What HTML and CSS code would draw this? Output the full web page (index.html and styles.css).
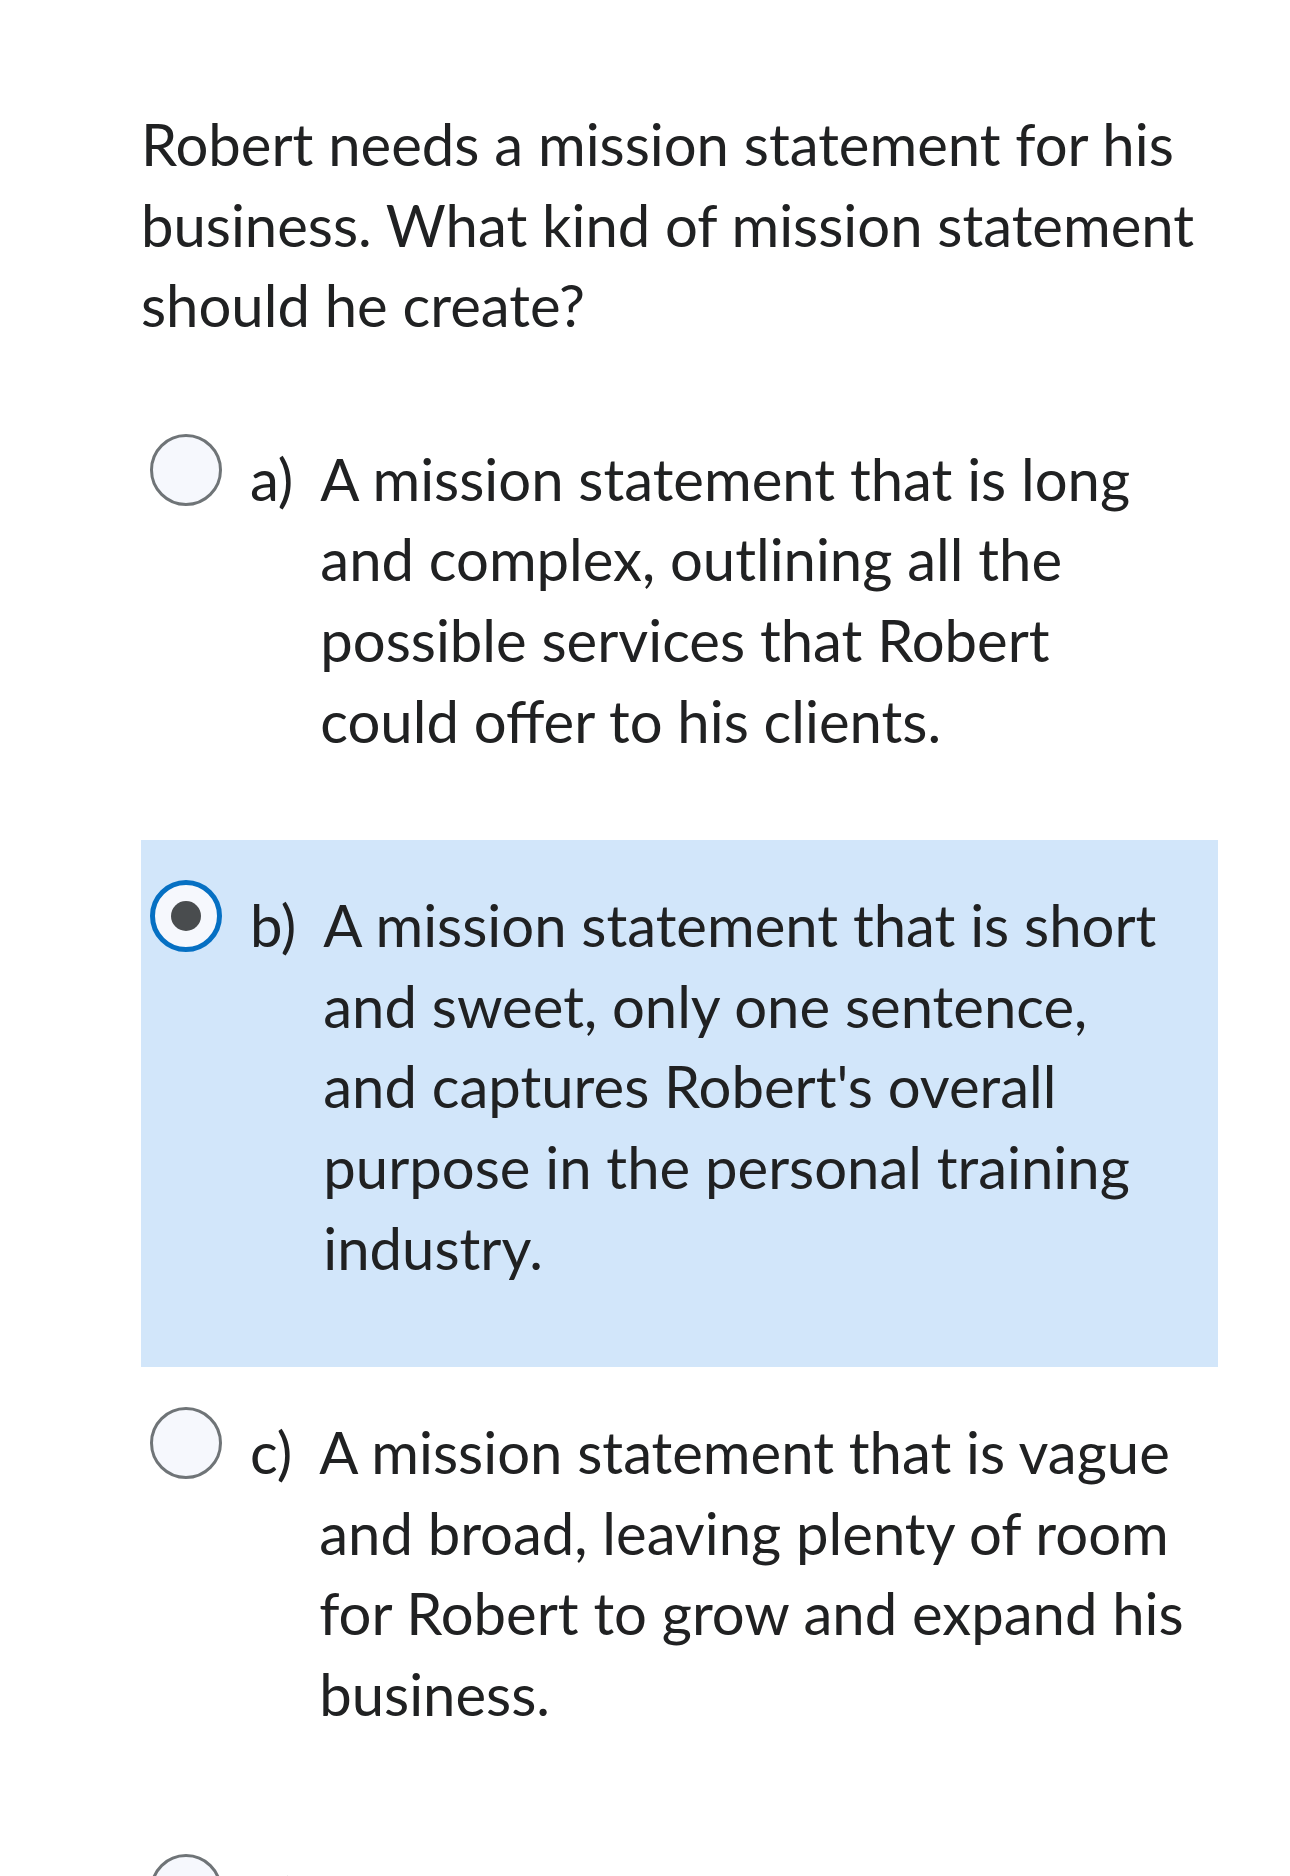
FILE: index.html
```html
<!DOCTYPE html>
<html lang="en">
<head>
<meta charset="utf-8">
<title>Quiz question</title>
<link rel="stylesheet" href="styles.css">
</head>
<body>
<main class="quiz">
  <p class="question">Robert needs a mission statement for his business. What kind of mission statement should he create?</p>
  <div class="options">
    <div class="option">
      <span class="radio"></span>
      <span class="label">a)</span>
      <span class="text">A mission statement that is long and complex, outlining all the possible services that Robert could offer to his clients.</span>
    </div>
    <div class="option selected">
      <span class="radio checked"></span>
      <span class="label">b)</span>
      <span class="text">A mission statement that is short and sweet, only one sentence, and captures Robert's overall purpose in the personal training industry.</span>
    </div>
    <div class="option">
      <span class="radio"></span>
      <span class="label">c)</span>
      <span class="text">A mission statement that is vague and broad, leaving plenty of room for Robert to grow and expand his business.</span>
    </div>
    <div class="option">
      <span class="radio"></span>
      <span class="label">d)</span>
      <span class="text">A mission statement that focuses only on the financial goals of the business.</span>
    </div>
  </div>
</main>
</body>
</html>
```
FILE: styles.css
```css
html, body {
  margin: 0;
  padding: 0;
  background: #ffffff;
}
body {
  font-family: "Lato", "Noto Sans", sans-serif;
  color: #202122;
  font-size: 58px;
  line-height: 80.6px;
}
.quiz {
  width: 1077px;
  margin-left: 141px;
  padding-top: 104px;
}
.question {
  margin: 0 0 48px 0;
}
.options {
  display: flex;
  flex-direction: column;
}
.option {
  display: flex;
  align-items: flex-start;
  padding: 40px 26px 79px 9px;
}
.option.selected {
  background: #d2e6fa;
}
.radio {
  flex: none;
  box-sizing: border-box;
  width: 72px;
  height: 72px;
  border-radius: 50%;
  border: 3px solid #6f7477;
  background: #f6f8fd;
  margin-right: 28px;
  position: relative;
}
.radio.checked {
  border: 5px solid #0670c3;
}
.radio.checked::after {
  content: "";
  position: absolute;
  left: 50%;
  top: 50%;
  width: 30px;
  height: 30px;
  margin: -15px 0 0 -15px;
  border-radius: 50%;
  background: #494c4e;
}
.label {
  flex: none;
  margin-top: 5px;
  margin-right: 27px;
}
.text {
  flex: 1;
  margin-top: 5px;
}
```
